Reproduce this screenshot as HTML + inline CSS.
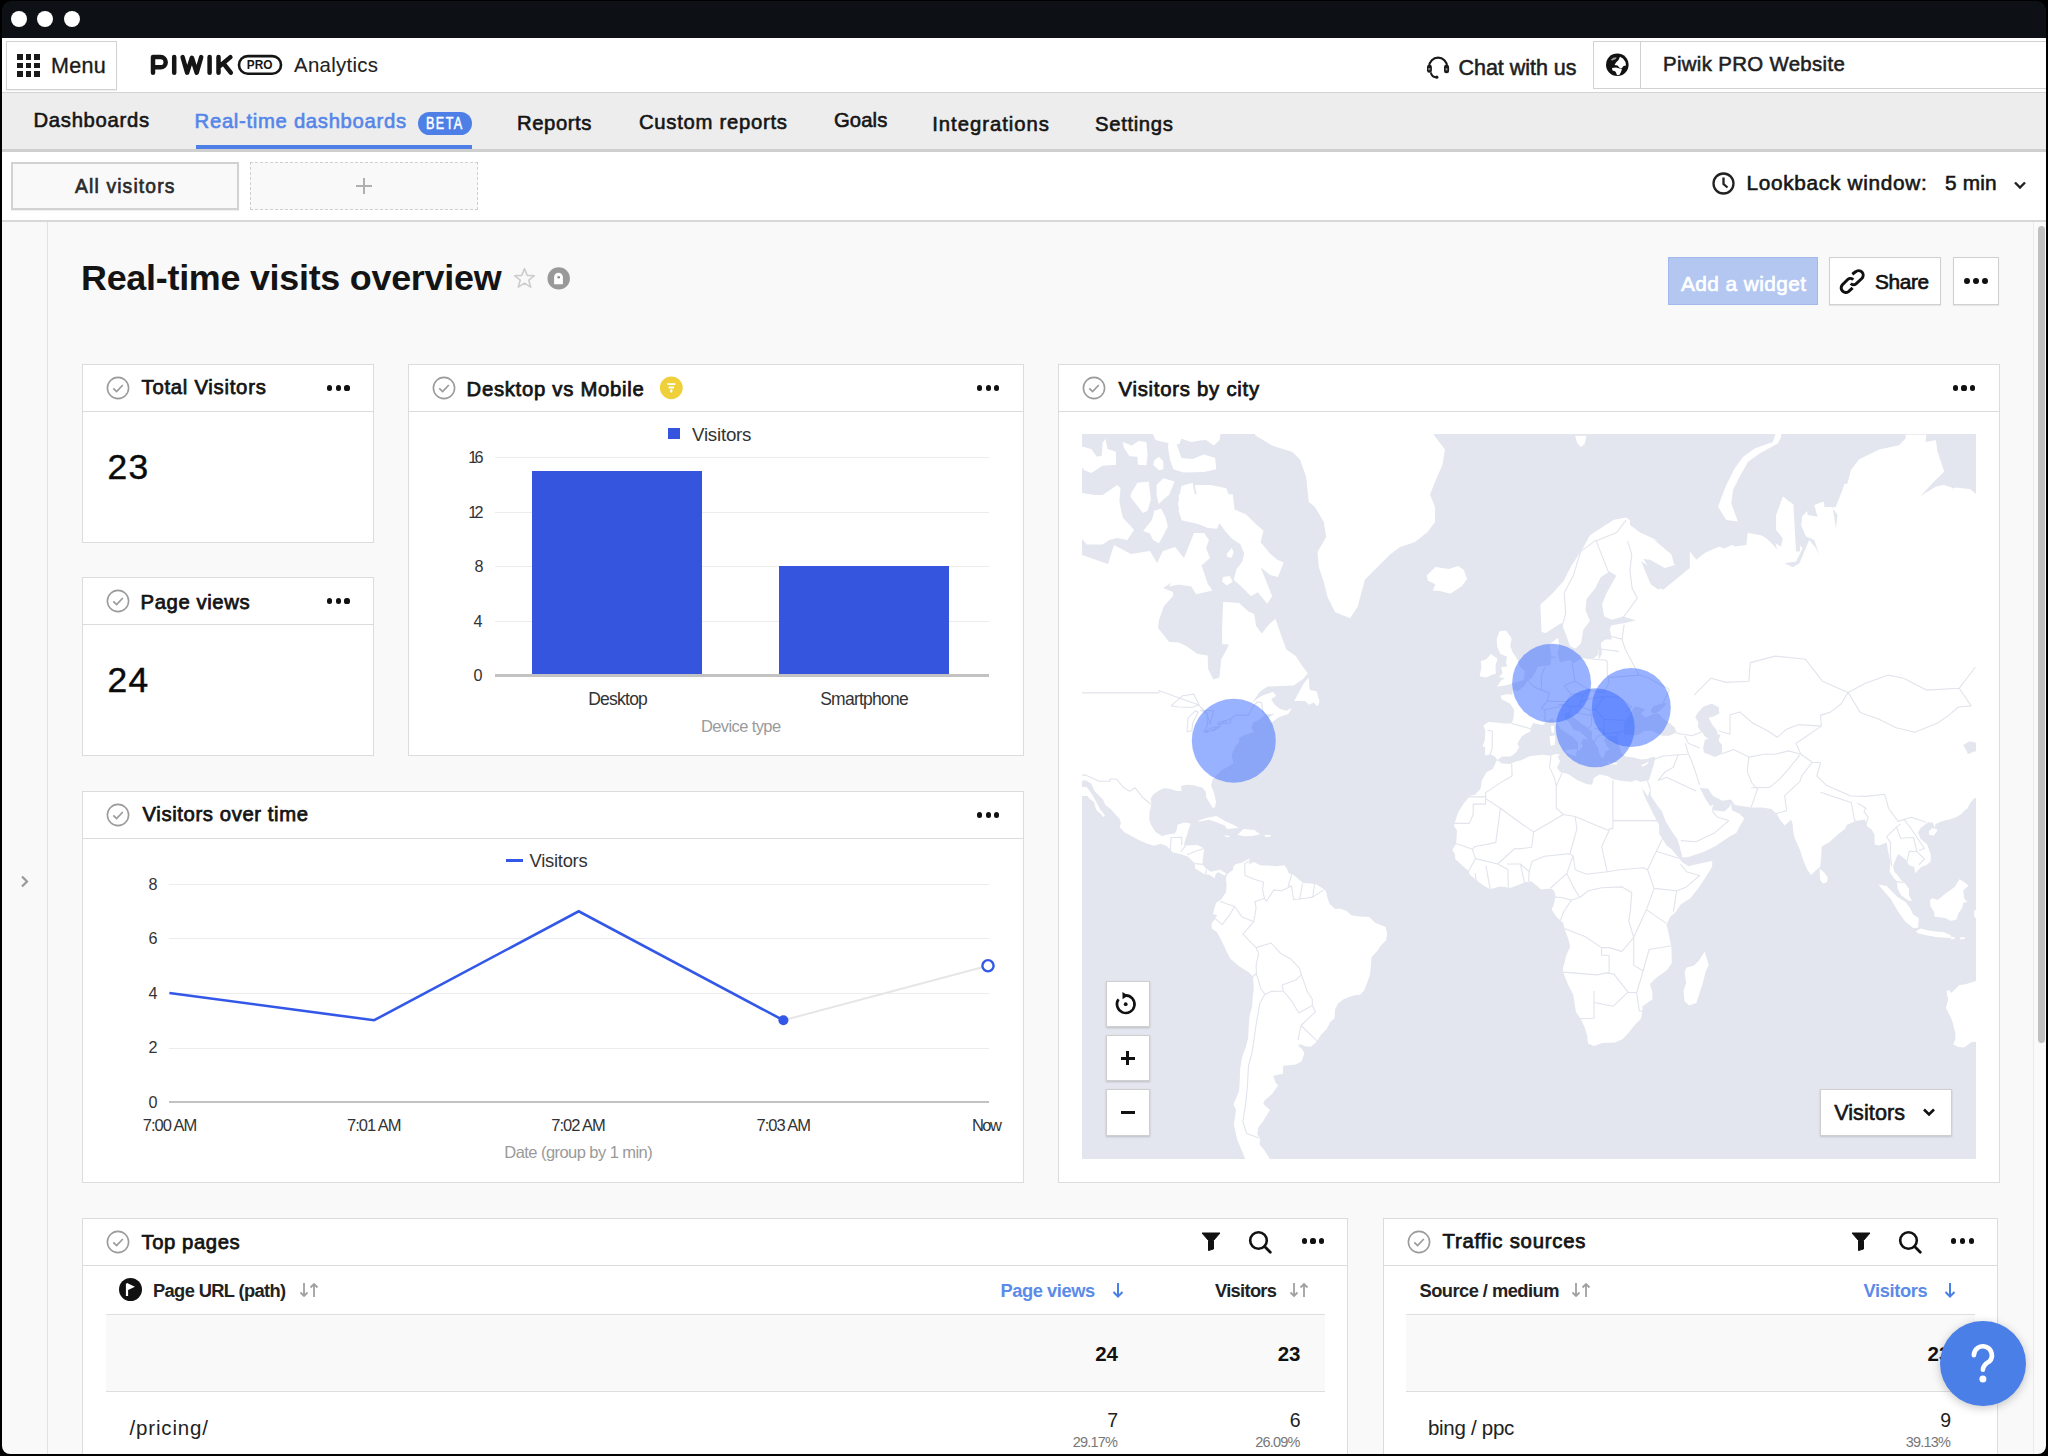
<!DOCTYPE html>
<html><head><meta charset="utf-8"><style>
html,body{margin:0;padding:0;}
body{width:2048px;height:1456px;background:#000;position:relative;overflow:hidden;font-family:"Liberation Sans",sans-serif;}
.b{position:absolute;}
.t{position:absolute;white-space:nowrap;font-family:"Liberation Sans",sans-serif;}
</style></head><body>
<div class="b" style="left:2px;top:1px;width:2044px;height:40px;background:#0d1115;border-radius:9px 9px 0 0"></div>
<div class="b" style="left:2px;top:38px;width:2044px;height:1416px;background:#fff;border-radius:0 0 9px 9px;overflow:hidden" id="win"></div>
<div class="b" style="left:11px;top:10.5px;width:16px;height:16px;border-radius:50%;background:#fff"></div>
<div class="b" style="left:36.5px;top:10.5px;width:16px;height:16px;border-radius:50%;background:#fff"></div>
<div class="b" style="left:63.5px;top:10.5px;width:16px;height:16px;border-radius:50%;background:#fff"></div>
<div class="b" style="left:6px;top:41px;width:111px;height:49px;background:#fff;border:1px solid #d2d2d2;box-sizing:border-box;box-shadow:0 1px 1px rgba(0,0,0,.06);"></div>
<div class="b" style="left:17.0px;top:54.0px;width:5.5px;height:5.5px;background:#1a1a1a;"></div>
<div class="b" style="left:17.0px;top:62.5px;width:5.5px;height:5.5px;background:#1a1a1a;"></div>
<div class="b" style="left:17.0px;top:71.0px;width:5.5px;height:5.5px;background:#1a1a1a;"></div>
<div class="b" style="left:25.5px;top:54.0px;width:5.5px;height:5.5px;background:#1a1a1a;"></div>
<div class="b" style="left:25.5px;top:62.5px;width:5.5px;height:5.5px;background:#1a1a1a;"></div>
<div class="b" style="left:25.5px;top:71.0px;width:5.5px;height:5.5px;background:#1a1a1a;"></div>
<div class="b" style="left:34.0px;top:54.0px;width:5.5px;height:5.5px;background:#1a1a1a;"></div>
<div class="b" style="left:34.0px;top:62.5px;width:5.5px;height:5.5px;background:#1a1a1a;"></div>
<div class="b" style="left:34.0px;top:71.0px;width:5.5px;height:5.5px;background:#1a1a1a;"></div>
<div class="t" id="t0" style="left:51.00px;top:55.62px;font-size:21.50px;line-height:21.50px;color:#1a1a1a;letter-spacing:0.333px;-webkit-text-stroke:0.35px #1a1a1a;">Menu</div>
<svg class="b" style="left:0;top:0" width="300" height="90" viewBox="0 0 300 90"><g fill="none" stroke="#151515" stroke-width="4.5" stroke-linecap="round" stroke-linejoin="round"><path d="M153 72.7 V57.1 H160.6 A5.1 5.1 0 0 1 160.6 67.3 H153"/><path d="M174.2 57.1 V72.7"/><path d="M182.6 57.1 L187.1 72.7 L191.9 57.8 L196.7 72.7 L201.2 57.1"/><path d="M209.6 57.1 V72.7"/><path d="M218.5 57.1 V72.7 M230.4 57.1 L219.8 66 M223.4 63.3 L230.8 72.7"/></g><rect x="239" y="56.1" width="42" height="17.6" rx="8.8" fill="none" stroke="#151515" stroke-width="2.6"/><text x="246.8" y="69.4" font-family="Liberation Sans" font-weight="bold" font-size="12" fill="#151515" textLength="25.7" lengthAdjust="spacingAndGlyphs">PRO</text></svg>
<div class="t" id="t1" style="left:294.00px;top:55.22px;font-size:20.40px;line-height:20.40px;color:#222;letter-spacing:0.294px;-webkit-text-stroke:0.1px #222;">Analytics</div>
<svg class="b" style="left:1420px;top:48px" width="40" height="40" viewBox="0 0 40 40"><path d="M9.2 18.5 A8.9 8.9 0 0 1 27 18.5" fill="none" stroke="#1a1a1a" stroke-width="2.2"/><rect x="7" y="16.8" width="4.9" height="8" rx="2.3" fill="#1a1a1a"/><rect x="24" y="16.8" width="5.1" height="8.4" rx="2.3" fill="#1a1a1a"/><rect x="8.3" y="20" width="2" height="2.2" fill="#8a8a8a"/><rect x="25.5" y="20.2" width="2" height="2.2" fill="#8a8a8a"/><path d="M10.8 24.5 Q11.8 29.3 16.6 29.3" fill="none" stroke="#1a1a1a" stroke-width="2"/><circle cx="16.8" cy="29.2" r="1.6" fill="#1a1a1a"/></svg>
<div class="t" id="t2" style="left:1458.50px;top:58.36px;font-size:21.50px;line-height:21.50px;color:#1e1e1e;letter-spacing:-0.029px;-webkit-text-stroke:0.55px #1e1e1e;">Chat with us</div>
<div class="b" style="left:1593px;top:41px;width:453px;height:48px;background:#fff;border:1px solid #d2d2d2;box-sizing:border-box;border-right:none;"></div>
<div class="b" style="left:1640px;top:42px;width:1px;height:46px;background:#d2d2d2;"></div>
<svg class="b" style="left:1600px;top:48px" width="36" height="36" viewBox="0 0 36 36"><circle cx="17.3" cy="16.7" r="11.3" fill="#111"/><path d="M20 8.8 L23 10.5 L25.5 14 L26 17.5 L23.5 18 L22 20 L20 20.2 L17.5 17.5 L14.5 17 L16 14.5 L18.5 12 Z" fill="#fff"/><path d="M12 20 L16 19.5 L19.5 20.5 L22 20.8 L21 24 L19.5 26.8 L17 27.3 L16 24.5 L15 23.3 L12.5 22.5 Z" fill="#fff"/><path d="M10.5 12 L13 9.8 L16.5 9.2 L16 11 L12.5 12.5 Z" fill="#9a9a9a"/></svg>
<div class="t" id="t3" style="left:1663.00px;top:54.04px;font-size:20.40px;line-height:20.40px;color:#1e1e1e;letter-spacing:0.337px;-webkit-text-stroke:0.55px #1e1e1e;">Piwik PRO Website</div>
<div class="b" style="left:2px;top:92px;width:2044px;height:1px;background:#d4d4d4;"></div>
<div class="b" style="left:2px;top:93px;width:2044px;height:56px;background:#ededed;"></div>
<div class="b" style="left:2px;top:149px;width:2044px;height:3px;background:#cfcfcf;"></div>
<div class="t" id="t4" style="left:33.50px;top:110.38px;font-size:20.30px;line-height:20.30px;color:#151515;letter-spacing:0.690px;-webkit-text-stroke:0.6px #151515;">Dashboards</div>
<div class="t" id="t5" style="left:517.00px;top:112.77px;font-size:20.30px;line-height:20.30px;color:#151515;letter-spacing:0.570px;-webkit-text-stroke:0.6px #151515;">Reports</div>
<div class="t" id="t6" style="left:639.00px;top:111.97px;font-size:20.30px;line-height:20.30px;color:#151515;letter-spacing:0.712px;-webkit-text-stroke:0.6px #151515;">Custom reports</div>
<div class="t" id="t7" style="left:834.00px;top:110.38px;font-size:20.30px;line-height:20.30px;color:#151515;letter-spacing:0.083px;-webkit-text-stroke:0.6px #151515;">Goals</div>
<div class="t" id="t8" style="left:932.20px;top:113.57px;font-size:20.30px;line-height:20.30px;color:#151515;letter-spacing:0.973px;-webkit-text-stroke:0.6px #151515;">Integrations</div>
<div class="t" id="t9" style="left:1095.10px;top:113.57px;font-size:20.30px;line-height:20.30px;color:#151515;letter-spacing:0.630px;-webkit-text-stroke:0.6px #151515;">Settings</div>
<div class="t" id="t10" style="left:194.60px;top:111.18px;font-size:20.30px;line-height:20.30px;color:#5585e8;letter-spacing:0.688px;-webkit-text-stroke:0.6px #5585e8;">Real-time dashboards</div>
<div class="b" style="left:418px;top:112px;width:54px;height:23px;background:#4d7fe6;border-radius:12px;"></div>
<div class="t" id="t11" style="left:426.20px;top:116.25px;font-size:15.80px;line-height:15.80px;color:#fff;letter-spacing:1.740px;-webkit-text-stroke:0.45px #fff;transform:scaleX(0.8);transform-origin:0 0;">BETA</div>
<div class="b" style="left:196px;top:144.5px;width:276px;height:4.5px;background:#4d7fe6;"></div>
<div class="b" style="left:11px;top:162px;width:228px;height:48px;background:#f9f9f9;border:2px solid #d2d2d2;box-sizing:border-box;box-shadow:0 1px 1px rgba(0,0,0,.06);"></div>
<div class="t" id="t12" style="left:75.00px;top:177.47px;font-size:19.30px;line-height:19.30px;color:#2a2a2a;letter-spacing:1.150px;-webkit-text-stroke:0.65px #2a2a2a;">All visitors</div>
<div class="b" style="left:250px;top:162px;width:228px;height:48px;box-sizing:border-box;border:1.5px dashed #cfcfcf;background:#f9f9f9"></div>
<div class="b" style="left:356px;top:185px;width:16px;height:2px;background:#b0b0b0;"></div>
<div class="b" style="left:363px;top:178px;width:2px;height:16px;background:#b0b0b0;"></div>
<svg class="b" style="left:1711px;top:171px" width="25" height="25" viewBox="0 0 25 25"><circle cx="12.5" cy="12.5" r="10" fill="none" stroke="#222" stroke-width="2.3"/><path d="M12.5 6.5 V13 L16.5 16.5" fill="none" stroke="#222" stroke-width="2.3"/></svg>
<div class="t" id="t13" style="left:1746.50px;top:172.64px;font-size:20.80px;line-height:20.80px;color:#161616;letter-spacing:0.690px;-webkit-text-stroke:0.6px #161616;">Lookback window:</div>
<div class="t" id="t14" style="left:1945.00px;top:172.64px;font-size:20.80px;line-height:20.80px;color:#161616;letter-spacing:0.162px;-webkit-text-stroke:0.6px #161616;">5 min</div>
<svg class="b" style="left:2012px;top:178.5px" width="16" height="12" viewBox="0 0 16 12"><path d="M3 3.5 L8 8.5 L13 3.5" fill="none" stroke="#222" stroke-width="2.4"/></svg>
<div class="b" style="left:2px;top:220px;width:2044px;height:2px;background:#d8d8d8;"></div>
<div class="b" style="left:2px;top:222px;width:2044px;height:1232px;background:#f9f9f9;"></div>
<div class="b" style="left:47px;top:222px;width:1px;height:1232px;background:#e2e2e2;"></div>
<svg class="b" style="left:18px;top:873px" width="14" height="17" viewBox="0 0 14 17"><path d="M4 3.5 L9 8.5 L4 13.5" fill="none" stroke="#999" stroke-width="2.2"/></svg>
<div class="b" style="left:2033px;top:222px;width:1px;height:1232px;background:#ebebeb;"></div>
<div class="b" style="left:2034px;top:222px;width:12px;height:1232px;background:#fafafa;"></div>
<div class="b" style="left:2038px;top:226px;width:7px;height:817px;background:#c1c1c1;border-radius:4px;"></div>
<div class="t" id="t15" style="left:81.00px;top:260.90px;font-size:35.90px;line-height:35.90px;font-weight:bold;color:#141414;letter-spacing:-0.265px;">Real-time visits overview</div>
<svg class="b" style="left:512px;top:266px" width="25" height="25" viewBox="0 0 24 24"><path d="M12 2.5 L14.6 9 L21.5 9.3 L16.1 13.6 L18 20.3 L12 16.5 L6 20.3 L7.9 13.6 L2.5 9.3 L9.4 9 Z" fill="none" stroke="#cdcdcd" stroke-width="1.5" stroke-linejoin="round"/></svg>
<svg class="b" style="left:547px;top:267px" width="24" height="24" viewBox="0 0 24 24"><circle cx="11.7" cy="11.4" r="11.2" fill="#999"/><path d="M7.1 17.2 V10.2 A4.4 4.4 0 0 1 15.9 10.2 V17.2 Z" fill="#fff"/><circle cx="11.7" cy="10.3" r="1.3" fill="#888"/></svg>
<div class="b" style="left:1668px;top:257px;width:150px;height:48px;background:#b3c7f1;border:1px solid #a3b9ee;box-sizing:border-box;"></div>
<div class="t" id="t16" style="left:1681.00px;top:273.98px;font-size:20.80px;line-height:20.80px;color:#fff;letter-spacing:0.432px;-webkit-text-stroke:0.65px #fff;">Add a widget</div>
<div class="b" style="left:1829px;top:257px;width:112px;height:48px;background:#fff;border:1px solid #d0d0d0;box-sizing:border-box;box-shadow:0 1px 1px rgba(0,0,0,.07);"></div>
<svg class="b" style="left:1834px;top:264px" width="36" height="36" viewBox="0 0 36 36"><g fill="none" stroke="#111" stroke-width="3"><path d="M18.3 10.2 L21.5 7.8 A4.6 4.6 0 0 1 27.8 14.5 L22 19.8 A3.8 3.8 0 0 1 16.8 19.5"/><path d="M19.2 15.8 A3.8 3.8 0 0 0 13.9 15.3 L8.2 21 A4.6 4.6 0 0 0 14.5 27.6 L18.6 23.8"/></g></svg>
<div class="t" id="t17" style="left:1875.00px;top:272.42px;font-size:20.80px;line-height:20.80px;color:#111;letter-spacing:-0.375px;-webkit-text-stroke:0.65px #111;">Share</div>
<div class="b" style="left:1953px;top:257px;width:46px;height:48px;background:#fff;border:1px solid #d0d0d0;box-sizing:border-box;box-shadow:0 1px 1px rgba(0,0,0,.07);"></div>
<div class="b" style="left:1963.8px;top:278.3px;width:5.8px;height:5.8px;border-radius:50%;background:#111"></div>
<div class="b" style="left:1972.8px;top:278.3px;width:5.8px;height:5.8px;border-radius:50%;background:#111"></div>
<div class="b" style="left:1981.8px;top:278.3px;width:5.8px;height:5.8px;border-radius:50%;background:#111"></div>
<div class="b" style="left:82px;top:364px;width:292px;height:179px;background:#fff;border:1px solid #dcdcdc;box-sizing:border-box;"></div>
<div class="b" style="left:82px;top:411px;width:292px;height:1px;background:#dcdcdc;"></div>
<svg class="b" style="left:105.5px;top:375.5px" width="24" height="24" viewBox="0 0 24 24"><circle cx="12" cy="12" r="10.6" fill="none" stroke="#9b9b9b" stroke-width="1.6"/><path d="M7.3 12.3 L10.6 15.5 L16.8 9" fill="none" stroke="#9b9b9b" stroke-width="1.7"/></svg>
<div class="t" id="t18" style="left:141.50px;top:376.85px;font-size:20.30px;line-height:20.30px;color:#141414;letter-spacing:0.745px;-webkit-text-stroke:0.75px #141414;">Total Visitors</div>
<div class="b" style="left:327.2px;top:385.4px;width:5.2px;height:5.2px;border-radius:50%;background:#111"></div>
<div class="b" style="left:335.8px;top:385.4px;width:5.2px;height:5.2px;border-radius:50%;background:#111"></div>
<div class="b" style="left:344.4px;top:385.4px;width:5.2px;height:5.2px;border-radius:50%;background:#111"></div>
<div class="t" id="t19" style="left:107.40px;top:450.15px;font-size:35.40px;line-height:35.40px;color:#0a0a0a;letter-spacing:1.460px;-webkit-text-stroke:0.45px #0a0a0a;">23</div>
<div class="b" style="left:82px;top:577px;width:292px;height:179px;background:#fff;border:1px solid #dcdcdc;box-sizing:border-box;"></div>
<div class="b" style="left:82px;top:624px;width:292px;height:1px;background:#dcdcdc;"></div>
<svg class="b" style="left:105.5px;top:588.5px" width="24" height="24" viewBox="0 0 24 24"><circle cx="12" cy="12" r="10.6" fill="none" stroke="#9b9b9b" stroke-width="1.6"/><path d="M7.3 12.3 L10.6 15.5 L16.8 9" fill="none" stroke="#9b9b9b" stroke-width="1.7"/></svg>
<div class="t" id="t20" style="left:140.50px;top:592.22px;font-size:20.30px;line-height:20.30px;color:#141414;letter-spacing:0.598px;-webkit-text-stroke:0.75px #141414;">Page views</div>
<div class="b" style="left:327.2px;top:598.4px;width:5.2px;height:5.2px;border-radius:50%;background:#111"></div>
<div class="b" style="left:335.8px;top:598.4px;width:5.2px;height:5.2px;border-radius:50%;background:#111"></div>
<div class="b" style="left:344.4px;top:598.4px;width:5.2px;height:5.2px;border-radius:50%;background:#111"></div>
<div class="t" id="t21" style="left:107.50px;top:663.39px;font-size:35.40px;line-height:35.40px;color:#0a0a0a;letter-spacing:1.340px;-webkit-text-stroke:0.45px #0a0a0a;">24</div>
<div class="b" style="left:408px;top:364px;width:616px;height:392px;background:#fff;border:1px solid #dcdcdc;box-sizing:border-box;"></div>
<div class="b" style="left:408px;top:411px;width:616px;height:1px;background:#dcdcdc;"></div>
<svg class="b" style="left:431.5px;top:375.5px" width="24" height="24" viewBox="0 0 24 24"><circle cx="12" cy="12" r="10.6" fill="none" stroke="#9b9b9b" stroke-width="1.6"/><path d="M7.3 12.3 L10.6 15.5 L16.8 9" fill="none" stroke="#9b9b9b" stroke-width="1.7"/></svg>
<div class="t" id="t22" style="left:466.50px;top:379.22px;font-size:20.30px;line-height:20.30px;color:#141414;letter-spacing:0.729px;-webkit-text-stroke:0.75px #141414;">Desktop vs Mobile</div>
<div class="b" style="left:977.1px;top:385.4px;width:5.2px;height:5.2px;border-radius:50%;background:#111"></div>
<div class="b" style="left:985.7px;top:385.4px;width:5.2px;height:5.2px;border-radius:50%;background:#111"></div>
<div class="b" style="left:994.3px;top:385.4px;width:5.2px;height:5.2px;border-radius:50%;background:#111"></div>
<div class="b" style="left:82px;top:791px;width:942px;height:392px;background:#fff;border:1px solid #dcdcdc;box-sizing:border-box;"></div>
<div class="b" style="left:82px;top:838px;width:942px;height:1px;background:#dcdcdc;"></div>
<svg class="b" style="left:105.5px;top:802.5px" width="24" height="24" viewBox="0 0 24 24"><circle cx="12" cy="12" r="10.6" fill="none" stroke="#9b9b9b" stroke-width="1.6"/><path d="M7.3 12.3 L10.6 15.5 L16.8 9" fill="none" stroke="#9b9b9b" stroke-width="1.7"/></svg>
<div class="t" id="t23" style="left:142.50px;top:803.85px;font-size:20.30px;line-height:20.30px;color:#141414;letter-spacing:0.609px;-webkit-text-stroke:0.75px #141414;">Visitors over time</div>
<div class="b" style="left:977.1px;top:812.4px;width:5.2px;height:5.2px;border-radius:50%;background:#111"></div>
<div class="b" style="left:985.7px;top:812.4px;width:5.2px;height:5.2px;border-radius:50%;background:#111"></div>
<div class="b" style="left:994.3px;top:812.4px;width:5.2px;height:5.2px;border-radius:50%;background:#111"></div>
<div class="b" style="left:1058px;top:364px;width:942px;height:819px;background:#fff;border:1px solid #dcdcdc;box-sizing:border-box;"></div>
<div class="b" style="left:1058px;top:411px;width:942px;height:1px;background:#dcdcdc;"></div>
<svg class="b" style="left:1081.5px;top:375.5px" width="24" height="24" viewBox="0 0 24 24"><circle cx="12" cy="12" r="10.6" fill="none" stroke="#9b9b9b" stroke-width="1.6"/><path d="M7.3 12.3 L10.6 15.5 L16.8 9" fill="none" stroke="#9b9b9b" stroke-width="1.7"/></svg>
<div class="t" id="t24" style="left:1118.50px;top:379.22px;font-size:20.30px;line-height:20.30px;color:#141414;letter-spacing:0.757px;-webkit-text-stroke:0.75px #141414;">Visitors by city</div>
<div class="b" style="left:1952.8px;top:385.4px;width:5.2px;height:5.2px;border-radius:50%;background:#111"></div>
<div class="b" style="left:1961.4px;top:385.4px;width:5.2px;height:5.2px;border-radius:50%;background:#111"></div>
<div class="b" style="left:1970.0px;top:385.4px;width:5.2px;height:5.2px;border-radius:50%;background:#111"></div>
<div class="b" style="left:82px;top:1218px;width:1266px;height:282px;background:#fff;border:1px solid #dcdcdc;box-sizing:border-box;"></div>
<div class="b" style="left:82px;top:1265px;width:1266px;height:1px;background:#dcdcdc;"></div>
<svg class="b" style="left:105.5px;top:1229.5px" width="24" height="24" viewBox="0 0 24 24"><circle cx="12" cy="12" r="10.6" fill="none" stroke="#9b9b9b" stroke-width="1.6"/><path d="M7.3 12.3 L10.6 15.5 L16.8 9" fill="none" stroke="#9b9b9b" stroke-width="1.7"/></svg>
<div class="t" id="t25" style="left:141.50px;top:1232.42px;font-size:20.30px;line-height:20.30px;color:#141414;letter-spacing:0.565px;-webkit-text-stroke:0.75px #141414;">Top pages</div>
<div class="b" style="left:1383px;top:1218px;width:615px;height:282px;background:#fff;border:1px solid #dcdcdc;box-sizing:border-box;"></div>
<div class="b" style="left:1383px;top:1265px;width:615px;height:1px;background:#dcdcdc;"></div>
<svg class="b" style="left:1406.5px;top:1229.5px" width="24" height="24" viewBox="0 0 24 24"><circle cx="12" cy="12" r="10.6" fill="none" stroke="#9b9b9b" stroke-width="1.6"/><path d="M7.3 12.3 L10.6 15.5 L16.8 9" fill="none" stroke="#9b9b9b" stroke-width="1.7"/></svg>
<div class="t" id="t26" style="left:1442.50px;top:1230.84px;font-size:20.30px;line-height:20.30px;color:#141414;letter-spacing:0.786px;-webkit-text-stroke:0.75px #141414;">Traffic sources</div>
<div class="b" style="left:495px;top:457px;width:494px;height:1px;background:#ececec;"></div>
<div class="t" id="t27" style="left:468.20px;top:449.01px;font-size:16.20px;line-height:16.20px;color:#333;letter-spacing:-2.700px;">16</div>
<div class="b" style="left:495px;top:512px;width:494px;height:1px;background:#ececec;"></div>
<div class="t" id="t28" style="left:468.20px;top:503.94px;font-size:16.20px;line-height:16.20px;color:#333;letter-spacing:-2.700px;">12</div>
<div class="b" style="left:495px;top:566px;width:494px;height:1px;background:#ececec;"></div>
<div class="t" id="t29" style="left:474.50px;top:558.08px;font-size:16.20px;line-height:16.20px;color:#333;letter-spacing:0.000px;">8</div>
<div class="b" style="left:495px;top:621px;width:494px;height:1px;background:#ececec;"></div>
<div class="t" id="t30" style="left:473.50px;top:613.01px;font-size:16.20px;line-height:16.20px;color:#333;letter-spacing:0.000px;">4</div>
<div class="t" id="t31" style="left:473.50px;top:667.15px;font-size:16.20px;line-height:16.20px;color:#333;letter-spacing:0.000px;">0</div>
<div class="b" style="left:532px;top:471px;width:170px;height:204px;background:#3555de;"></div>
<div class="b" style="left:779px;top:566px;width:170px;height:109px;background:#3555de;"></div>
<div class="b" style="left:495px;top:674px;width:494px;height:2.5px;background:#c2c2c2;"></div>
<div class="b" style="left:668px;top:428px;width:12px;height:11px;background:#3555de;"></div>
<div class="t" id="t32" style="left:692.00px;top:425.72px;font-size:18.70px;line-height:18.70px;color:#333;letter-spacing:-0.210px;">Visitors</div>
<div class="t" id="t33" style="left:588.15px;top:690.95px;font-size:17.50px;line-height:17.50px;color:#333;letter-spacing:-0.749px;">Desktop</div>
<div class="t" id="t34" style="left:820.16px;top:690.95px;font-size:17.50px;line-height:17.50px;color:#333;letter-spacing:-0.742px;">Smartphone</div>
<div class="t" id="t35" style="left:700.92px;top:718.01px;font-size:16.50px;line-height:16.50px;color:#9a9a9a;letter-spacing:-0.603px;">Device type</div>
<div class="b" style="left:169px;top:884px;width:820px;height:1px;background:#ececec;"></div>
<div class="t" id="t36" style="left:148.50px;top:876.05px;font-size:16.20px;line-height:16.20px;color:#333;letter-spacing:0.000px;">8</div>
<div class="b" style="left:169px;top:938px;width:820px;height:1px;background:#ececec;"></div>
<div class="t" id="t37" style="left:148.50px;top:930.15px;font-size:16.20px;line-height:16.20px;color:#333;letter-spacing:0.000px;">6</div>
<div class="b" style="left:169px;top:993px;width:820px;height:1px;background:#ececec;"></div>
<div class="t" id="t38" style="left:148.50px;top:985.05px;font-size:16.20px;line-height:16.20px;color:#333;letter-spacing:0.000px;">4</div>
<div class="b" style="left:169px;top:1048px;width:820px;height:1px;background:#ececec;"></div>
<div class="t" id="t39" style="left:148.50px;top:1039.15px;font-size:16.20px;line-height:16.20px;color:#333;letter-spacing:0.000px;">2</div>
<div class="t" id="t40" style="left:148.50px;top:1094.05px;font-size:16.20px;line-height:16.20px;color:#333;letter-spacing:0.000px;">0</div>
<div class="b" style="left:169px;top:1100.5px;width:820px;height:2.5px;background:#c2c2c2;"></div>
<svg class="b" style="left:0;top:0" width="1040" height="1200" viewBox="0 0 1040 1200"><line x1="783.4" y1="1020.25" x2="988.0" y2="965.75" stroke="#e6e6e6" stroke-width="2"/><polyline points="169.4,993.00 374.1,1020.25 578.7,911.25 783.4,1020.25" fill="none" stroke="#3358e8" stroke-width="2.6" stroke-linejoin="miter"/><circle cx="783.4" cy="1020.25" r="5" fill="#3358e8"/><circle cx="988.0" cy="965.75" r="5.6" fill="#fff" stroke="#3358e8" stroke-width="2.4"/></svg>
<div class="b" style="left:506px;top:858.5px;width:17px;height:3.0px;background:#3358e8;"></div>
<div class="t" id="t41" style="left:529.50px;top:852.08px;font-size:18.40px;line-height:18.40px;color:#333;letter-spacing:-0.257px;">Visitors</div>
<div class="t" id="t42" style="left:142.75px;top:1116.61px;font-size:16.50px;line-height:16.50px;color:#333;letter-spacing:-1.009px;">7:00 AM</div>
<div class="t" id="t43" style="left:347.00px;top:1116.61px;font-size:16.50px;line-height:16.50px;color:#333;letter-spacing:-1.009px;">7:01 AM</div>
<div class="t" id="t44" style="left:551.25px;top:1116.61px;font-size:16.50px;line-height:16.50px;color:#333;letter-spacing:-1.009px;">7:02 AM</div>
<div class="t" id="t45" style="left:756.50px;top:1116.61px;font-size:16.50px;line-height:16.50px;color:#333;letter-spacing:-1.009px;">7:03 AM</div>
<div class="t" id="t46" style="left:972.11px;top:1116.61px;font-size:16.50px;line-height:16.50px;color:#333;letter-spacing:-1.655px;">Now</div>
<div class="t" id="t47" style="left:504.31px;top:1144.37px;font-size:16.50px;line-height:16.50px;color:#9a9a9a;letter-spacing:-0.558px;">Date (group by 1 min)</div>
<svg class="b" style="left:1200.5px;top:1232px" width="20" height="19" viewBox="0 0 20 19"><path d="M1 1 H19 L12.5 8.5 V17 L7.5 18.5 V8.5 Z" fill="#111" stroke="#111" stroke-width="1" stroke-linejoin="round"/></svg>
<svg class="b" style="left:1248px;top:1229.5px" width="26" height="24" viewBox="0 0 26 24"><circle cx="10.5" cy="10.5" r="8.3" fill="none" stroke="#111" stroke-width="2.6"/><path d="M16.6 16.6 L22.3 22.3" stroke="#111" stroke-width="2.8" stroke-linecap="round"/></svg>
<div class="b" style="left:1301.8px;top:1238.4px;width:5.2px;height:5.2px;border-radius:50%;background:#111"></div>
<div class="b" style="left:1310.4px;top:1238.4px;width:5.2px;height:5.2px;border-radius:50%;background:#111"></div>
<div class="b" style="left:1319.0px;top:1238.4px;width:5.2px;height:5.2px;border-radius:50%;background:#111"></div>
<svg class="b" style="left:118px;top:1277px" width="25" height="25" viewBox="0 0 25 25"><circle cx="12.5" cy="12.5" r="11.5" fill="#111"/><path d="M9 19 V6.5" stroke="#fff" stroke-width="2.2"/><path d="M9 6 L17 9.7 L9 13.4 Z" fill="#fff"/></svg>
<div class="t" id="t48" style="left:153.00px;top:1281.82px;font-size:18.30px;line-height:18.30px;font-weight:bold;color:#222;letter-spacing:-0.623px;">Page URL (path)</div>
<svg class="b" style="left:299px;top:1282px" width="22" height="16" viewBox="0 0 22 16"><g fill="none" stroke="#a0a0a0" stroke-width="1.8"><path d="M5 1 V14 M1.5 10.5 L5 14 L8.5 10.5"/><path d="M15 15 V2 M11.5 5.5 L15 2 L18.5 5.5"/></g></svg>
<div class="t" id="t49" style="left:1000.50px;top:1281.82px;font-size:18.30px;line-height:18.30px;font-weight:bold;color:#5b8ae8;letter-spacing:-0.434px;">Page views</div>
<svg class="b" style="left:1111px;top:1282px" width="14" height="16" viewBox="0 0 14 16"><g fill="none" stroke="#4a7fe6" stroke-width="2"><path d="M7 1 V14.5 M2.5 10 L7 14.5 L11.5 10"/></g></svg>
<div class="t" id="t50" style="left:1215.00px;top:1281.52px;font-size:18.30px;line-height:18.30px;font-weight:bold;color:#222;letter-spacing:-0.680px;">Visitors</div>
<svg class="b" style="left:1289px;top:1282px" width="22" height="16" viewBox="0 0 22 16"><g fill="none" stroke="#a0a0a0" stroke-width="1.8"><path d="M5 1 V14 M1.5 10.5 L5 14 L8.5 10.5"/><path d="M15 15 V2 M11.5 5.5 L15 2 L18.5 5.5"/></g></svg>
<div class="b" style="left:106px;top:1314px;width:1219px;height:1px;background:#dedede;"></div>
<div class="b" style="left:106px;top:1315px;width:1219px;height:76px;background:#f9f9f9;"></div>
<div class="b" style="left:106px;top:1391px;width:1219px;height:1px;background:#dedede;"></div>
<div class="t" id="t51" style="left:1095.20px;top:1344.48px;font-size:20.50px;line-height:20.50px;font-weight:bold;color:#111;letter-spacing:0.000px;">24</div>
<div class="t" id="t52" style="left:1277.70px;top:1344.48px;font-size:20.50px;line-height:20.50px;font-weight:bold;color:#111;letter-spacing:0.000px;">23</div>
<div class="t" id="t53" style="left:129.50px;top:1417.70px;font-size:20.50px;line-height:20.50px;color:#222;letter-spacing:0.838px;">/pricing/</div>
<div class="t" id="t54" style="left:1107.15px;top:1411.22px;font-size:19.50px;line-height:19.50px;color:#222;letter-spacing:0.000px;">7</div>
<div class="t" id="t55" style="left:1289.65px;top:1411.22px;font-size:19.50px;line-height:19.50px;color:#222;letter-spacing:0.000px;">6</div>
<div class="t" id="t56" style="left:1072.74px;top:1434.57px;font-size:14.50px;line-height:14.50px;color:#777;letter-spacing:-0.787px;">29.17%</div>
<div class="t" id="t57" style="left:1255.24px;top:1434.57px;font-size:14.50px;line-height:14.50px;color:#777;letter-spacing:-0.787px;">26.09%</div>
<svg class="b" style="left:1850.5px;top:1232px" width="20" height="19" viewBox="0 0 20 19"><path d="M1 1 H19 L12.5 8.5 V17 L7.5 18.5 V8.5 Z" fill="#111" stroke="#111" stroke-width="1" stroke-linejoin="round"/></svg>
<svg class="b" style="left:1897.5px;top:1229.5px" width="26" height="24" viewBox="0 0 26 24"><circle cx="10.5" cy="10.5" r="8.3" fill="none" stroke="#111" stroke-width="2.6"/><path d="M16.6 16.6 L22.3 22.3" stroke="#111" stroke-width="2.8" stroke-linecap="round"/></svg>
<div class="b" style="left:1951.3px;top:1238.4px;width:5.2px;height:5.2px;border-radius:50%;background:#111"></div>
<div class="b" style="left:1959.9px;top:1238.4px;width:5.2px;height:5.2px;border-radius:50%;background:#111"></div>
<div class="b" style="left:1968.5px;top:1238.4px;width:5.2px;height:5.2px;border-radius:50%;background:#111"></div>
<div class="t" id="t58" style="left:1419.50px;top:1281.82px;font-size:18.30px;line-height:18.30px;font-weight:bold;color:#222;letter-spacing:-0.527px;">Source / medium</div>
<svg class="b" style="left:1571px;top:1282px" width="22" height="16" viewBox="0 0 22 16"><g fill="none" stroke="#a0a0a0" stroke-width="1.8"><path d="M5 1 V14 M1.5 10.5 L5 14 L8.5 10.5"/><path d="M15 15 V2 M11.5 5.5 L15 2 L18.5 5.5"/></g></svg>
<div class="t" id="t59" style="left:1863.50px;top:1281.52px;font-size:18.30px;line-height:18.30px;font-weight:bold;color:#5b8ae8;letter-spacing:-0.351px;">Visitors</div>
<svg class="b" style="left:1943px;top:1282px" width="14" height="16" viewBox="0 0 14 16"><g fill="none" stroke="#4a7fe6" stroke-width="2"><path d="M7 1 V14.5 M2.5 10 L7 14.5 L11.5 10"/></g></svg>
<div class="b" style="left:1406px;top:1314px;width:569px;height:1px;background:#dedede;"></div>
<div class="b" style="left:1406px;top:1315px;width:569px;height:76px;background:#f9f9f9;"></div>
<div class="b" style="left:1406px;top:1391px;width:569px;height:1px;background:#dedede;"></div>
<div class="t" id="t60" style="left:1927.60px;top:1344.08px;font-size:20.50px;line-height:20.50px;font-weight:bold;color:#111;letter-spacing:0.000px;">23</div>
<div class="t" id="t61" style="left:1428.00px;top:1417.70px;font-size:20.50px;line-height:20.50px;color:#222;letter-spacing:-0.296px;">bing / ppc</div>
<div class="t" id="t62" style="left:1940.15px;top:1411.22px;font-size:19.50px;line-height:19.50px;color:#222;letter-spacing:0.000px;">9</div>
<div class="t" id="t63" style="left:1905.74px;top:1434.57px;font-size:14.50px;line-height:14.50px;color:#777;letter-spacing:-0.787px;">39.13%</div>
<div class="b" style="left:1940.2px;top:1321px;width:85.4px;height:85.4px;border-radius:50%;background:#4a7fe8;box-shadow:0 2px 10px rgba(0,0,0,.22)"></div>
<svg class="b" style="left:1900px;top:1300px" width="140" height="140" viewBox="1900 1300 140 140"><path d="M1973.9 1355.3 A9 9 0 1 1 1989.6 1361.3 Q1982.9 1365.2 1982.9 1369.8" fill="none" stroke="#fff" stroke-width="4.6" stroke-linecap="round"/><circle cx="1982.9" cy="1379.1" r="3.5" fill="#fff"/></svg>
<svg class="b" style="left:1082px;top:434px" width="894" height="725" viewBox="1082 434 894 725"><rect x="1082" y="434" width="894" height="725" fill="#e3e6ee"/><path d="M1076.0 555.0 L1082.0 555.0 L1108.0 564.0 L1114.0 545.0 L1131.0 554.0 L1150.0 551.0 L1157.0 563.0 L1163.0 551.0 L1175.0 547.0 L1184.0 558.0 L1194.0 533.0 L1204.0 533.0 L1209.0 540.0 L1206.0 548.0 L1210.0 558.0 L1202.0 565.0 L1190.0 572.0 L1180.0 577.0 L1163.0 588.0 L1173.0 592.0 L1173.0 596.0 L1164.0 606.0 L1159.0 620.0 L1158.0 628.0 L1169.2 641.9 L1178.7 642.6 L1186.2 646.0 L1197.5 654.1 L1207.7 655.4 L1208.1 668.9 L1213.4 679.4 L1219.4 677.6 L1221.3 659.3 L1228.5 646.0 L1225.9 631.9 L1223.2 614.7 L1225.9 602.0 L1239.1 602.9 L1248.5 611.6 L1254.2 614.0 L1256.1 626.1 L1261.7 633.4 L1267.4 629.8 L1275.3 618.6 L1282.5 639.1 L1286.3 649.4 L1295.7 656.1 L1302.1 665.8 L1307.8 673.3 L1303.3 678.8 L1293.8 685.4 L1280.6 686.0 L1267.4 686.5 L1259.8 691.8 L1252.3 702.6 L1261.7 695.8 L1273.1 691.8 L1276.1 695.8 L1271.2 699.2 L1274.6 704.8 L1280.6 709.2 L1286.3 710.8 L1291.9 708.1 L1288.2 714.0 L1278.7 717.2 L1270.8 723.0 L1268.5 717.8 L1274.9 713.5 L1265.5 714.6 L1259.8 719.3 L1253.4 722.5 L1251.2 727.7 L1254.2 731.7 L1248.5 733.8 L1244.7 734.8 L1239.1 737.8 L1239.1 742.7 L1235.3 746.1 L1233.0 751.4 L1231.5 755.7 L1233.4 763.2 L1227.7 766.9 L1221.7 770.0 L1216.8 775.0 L1212.6 779.5 L1211.1 785.6 L1214.2 793.4 L1216.0 802.0 L1214.9 807.4 L1212.3 807.4 L1209.6 802.8 L1206.2 797.3 L1205.8 791.7 L1202.4 787.4 L1199.4 787.0 L1193.8 785.2 L1186.2 784.8 L1180.9 786.1 L1181.7 790.9 L1176.8 790.9 L1170.0 788.7 L1163.9 788.3 L1159.8 790.0 L1153.4 794.3 L1150.7 798.6 L1151.5 804.5 L1149.6 811.6 L1149.2 819.4 L1151.1 825.1 L1155.6 831.9 L1161.7 835.9 L1169.2 834.3 L1174.9 833.5 L1176.8 829.5 L1177.5 824.7 L1184.3 822.6 L1190.7 823.4 L1188.1 830.7 L1187.0 835.5 L1185.5 838.7 L1183.9 845.4 L1188.1 845.4 L1197.5 845.0 L1204.3 848.5 L1203.2 856.3 L1202.4 864.0 L1205.1 867.8 L1210.8 871.7 L1216.4 870.5 L1220.2 869.8 L1225.9 873.2 L1226.6 875.5 L1223.2 875.1 L1218.3 872.1 L1215.7 874.3 L1214.5 878.2 L1209.6 874.7 L1204.0 874.0 L1194.9 868.2 L1194.9 863.6 L1188.1 856.7 L1181.3 854.3 L1173.0 852.4 L1166.6 846.1 L1160.9 843.8 L1154.1 845.8 L1146.6 843.4 L1140.9 841.0 L1133.3 837.1 L1123.9 831.9 L1119.8 827.1 L1120.9 822.6 L1119.4 818.6 L1116.7 815.7 L1110.7 809.1 L1105.4 804.9 L1103.1 799.8 L1099.4 796.0 L1094.8 791.3 L1091.1 783.4 L1086.5 780.4 L1065.4 780.4 L1065.4 552.4Z M1065.4 787.0 L1086.5 787.0 L1089.9 791.3 L1092.6 795.6 L1095.6 800.7 L1097.5 804.1 L1100.5 809.9 L1102.0 811.6 L1105.0 815.7 L1103.1 816.9 L1101.3 814.5 L1096.3 809.9 L1094.8 804.9 L1094.1 802.0 L1089.9 799.0 L1087.3 796.0 L1065.4 795.6Z M1226.6 875.5 L1228.5 873.2 L1233.0 870.1 L1233.4 866.3 L1236.1 864.0 L1241.7 862.8 L1245.9 860.5 L1249.3 858.6 L1249.6 862.1 L1248.1 864.8 L1253.8 862.1 L1254.9 862.5 L1260.6 865.5 L1268.5 865.5 L1276.1 866.3 L1284.4 865.2 L1286.3 867.8 L1288.9 873.6 L1292.7 874.3 L1299.5 880.1 L1303.3 883.1 L1310.8 883.5 L1316.5 884.6 L1322.9 888.4 L1325.9 891.1 L1327.8 899.0 L1329.7 903.9 L1335.4 909.2 L1339.1 908.4 L1346.7 910.7 L1351.2 915.2 L1359.9 916.4 L1369.3 917.1 L1375.0 922.8 L1380.7 925.1 L1385.6 927.0 L1387.1 933.1 L1386.3 939.9 L1380.7 945.7 L1376.9 951.4 L1371.6 956.9 L1370.9 966.2 L1370.1 974.1 L1367.5 982.1 L1364.1 990.6 L1359.9 994.7 L1355.4 995.1 L1349.7 996.7 L1343.7 999.2 L1338.0 1003.4 L1335.0 1009.6 L1334.6 1018.2 L1330.5 1021.6 L1326.7 1029.0 L1321.0 1034.8 L1316.9 1041.6 L1311.2 1046.6 L1306.3 1046.6 L1300.2 1044.3 L1298.0 1045.2 L1302.5 1049.4 L1304.4 1053.6 L1301.4 1061.6 L1295.7 1064.5 L1287.4 1065.5 L1283.3 1065.5 L1282.9 1073.8 L1273.1 1075.8 L1275.7 1082.9 L1278.3 1085.0 L1272.3 1093.8 L1264.4 1100.8 L1263.2 1104.1 L1270.0 1110.1 L1262.9 1121.5 L1258.3 1127.4 L1257.2 1134.6 L1260.2 1138.3 L1259.5 1144.6 L1264.4 1150.3 L1271.9 1162.2 L1246.6 1162.2 L1237.2 1139.6 L1233.8 1124.5 L1236.1 1110.1 L1233.4 1104.6 L1239.1 1091.2 L1239.8 1079.9 L1240.2 1068.4 L1242.1 1057.3 L1245.9 1047.0 L1248.1 1037.9 L1248.9 1024.6 L1249.6 1016.0 L1252.3 1005.4 L1252.7 997.6 L1253.8 989.0 L1253.0 976.5 L1248.5 972.1 L1239.1 966.2 L1230.4 958.8 L1226.6 951.4 L1221.3 939.9 L1216.8 931.9 L1211.9 928.5 L1211.5 923.6 L1215.3 918.6 L1217.2 915.2 L1213.0 914.1 L1214.5 907.7 L1216.4 902.4 L1221.0 899.4 L1225.9 892.6 L1226.6 885.0 L1225.9 879.3Z M1426.7 575.4 L1435.4 567.0 L1448.6 568.9 L1458.1 566.1 L1463.7 569.8 L1467.1 579.0 L1461.9 586.0 L1450.5 593.7 L1441.1 591.2 L1432.8 590.4 L1435.4 584.3 L1427.9 580.8Z M1294.2 700.9 L1303.3 684.2 L1308.6 677.6 L1309.7 690.1 L1316.5 691.2 L1319.5 701.5 L1317.6 706.4 L1313.8 702.6 L1308.9 704.8 L1305.2 700.9Z M1197.5 821.0 L1207.0 817.7 L1216.4 816.1 L1225.9 821.4 L1233.4 824.7 L1238.7 827.9 L1227.0 829.1 L1224.7 825.5 L1214.5 821.4 L1208.9 819.8 L1199.4 821.4Z M1237.6 834.7 L1243.6 829.1 L1254.2 829.9 L1260.2 834.3 L1252.3 835.9 L1243.6 836.3Z M1222.8 835.1 L1230.4 835.9 L1227.7 837.5Z M1264.8 834.7 L1270.8 835.1 L1270.4 836.7 L1264.8 836.7Z M1497.0 686.5 L1505.3 685.4 L1523.8 680.0 L1524.9 670.8 L1519.6 666.4 L1517.4 659.3 L1512.5 652.1 L1510.2 646.0 L1511.7 638.4 L1506.0 630.5 L1499.6 631.2 L1496.6 639.1 L1497.4 647.4 L1500.4 654.1 L1507.2 656.7 L1506.0 662.6 L1507.2 666.4 L1501.1 667.0 L1502.6 673.3 L1498.9 677.0 L1505.3 678.8 L1501.5 680.0Z M1495.8 673.9 L1495.5 665.8 L1497.4 658.7 L1490.9 654.1 L1486.4 659.3 L1480.7 661.3 L1481.5 667.0 L1479.6 676.3 L1486.4 677.6 L1492.8 674.5Z M1497.4 759.9 L1494.7 756.2 L1490.6 754.3 L1484.9 755.2 L1485.3 747.1 L1482.6 746.6 L1484.9 739.7 L1485.3 730.7 L1483.4 725.6 L1488.3 722.0 L1496.6 722.5 L1504.2 723.5 L1511.7 723.5 L1513.6 717.8 L1514.0 709.7 L1510.2 703.7 L1501.5 699.2 L1500.8 695.8 L1507.2 694.1 L1512.5 694.7 L1512.5 688.9 L1517.7 691.2 L1524.2 686.0 L1527.9 680.6 L1531.7 678.2 L1535.5 672.0 L1537.4 667.0 L1544.6 665.8 L1550.6 665.1 L1551.4 656.1 L1549.5 643.9 L1558.1 637.7 L1559.3 646.7 L1557.4 653.4 L1560.0 662.6 L1569.5 660.0 L1573.3 663.2 L1582.7 658.0 L1588.7 659.3 L1592.9 659.3 L1597.8 654.7 L1598.2 646.0 L1598.7 660.0 L1602.0 653.8 L1600.9 642.9 L1605.3 639.6 L1611.9 639.6 L1609.7 628.6 L1611.9 625.3 L1625.1 623.1 L1636.0 620.3 L1622.9 616.5 L1611.9 619.8 L1604.2 616.5 L1602.0 604.4 L1606.4 593.4 L1616.3 575.8 L1609.7 571.4 L1600.9 576.9 L1595.4 587.9 L1586.6 598.9 L1585.5 609.9 L1589.9 620.9 L1583.3 629.7 L1581.1 642.9 L1575.6 648.4 L1570.1 646.2 L1565.7 634.1 L1561.3 623.1 L1545.9 633.0 L1541.5 631.9 L1540.4 604.4 L1551.4 594.5 L1563.5 581.3 L1571.2 565.9 L1582.2 549.5 L1589.9 535.2 L1605.3 525.3 L1614.1 519.8 L1626.2 517.6 L1636.0 525.3 L1644.8 533.0 L1658.0 540.7 L1643.1 536.9 L1654.4 540.1 L1671.4 554.4 L1674.1 564.2 L1682.8 568.0 L1684.6 546.3 L1692.2 553.4 L1699.7 555.4 L1718.6 546.3 L1724.3 548.4 L1737.5 542.2 L1745.1 532.5 L1763.9 535.8 L1771.5 543.2 L1777.2 549.4 L1771.5 530.3 L1771.5 513.1 L1777.2 497.1 L1780.9 494.5 L1788.5 500.9 L1793.4 504.6 L1796.0 551.4 L1799.8 551.4 L1801.7 516.7 L1814.9 503.4 L1822.5 486.7 L1824.4 507.1 L1835.7 507.1 L1843.2 488.0 L1847.0 474.3 L1858.3 459.7 L1877.2 450.5 L1888.5 442.5 L1888.5 427.3 L1933.9 427.3 L1937.6 452.0 L1945.2 474.3 L1941.4 484.0 L1949.0 486.7 L1971.6 489.3 L1990.5 490.6 L1990.5 738.3 L1976.2 746.6 L1977.3 743.2 L1969.7 741.2 L1963.3 745.1 L1967.1 751.9 L1967.8 754.3 L1974.3 751.4 L1990.5 753.3 L1990.5 797.7 L1976.2 797.3 L1973.5 799.0 L1970.1 803.2 L1967.1 808.7 L1964.8 810.3 L1961.4 814.0 L1956.5 816.9 L1949.7 819.4 L1947.1 819.8 L1941.4 821.4 L1935.7 823.9 L1934.6 827.5 L1932.7 822.6 L1928.2 822.2 L1920.6 827.9 L1918.0 832.7 L1920.6 838.7 L1927.1 844.6 L1930.8 854.3 L1930.8 861.3 L1926.3 865.2 L1921.4 866.7 L1915.0 873.2 L1914.2 866.7 L1909.3 865.5 L1905.5 859.4 L1899.5 854.7 L1898.0 854.3 L1896.1 858.2 L1893.1 865.9 L1894.2 871.7 L1897.2 874.7 L1901.0 880.1 L1904.4 882.7 L1908.9 888.8 L1908.9 895.6 L1912.0 900.5 L1909.3 900.9 L1901.0 895.2 L1897.6 888.8 L1896.9 881.6 L1891.6 875.1 L1889.7 871.7 L1890.4 862.1 L1887.8 850.1 L1886.7 842.6 L1879.1 845.4 L1874.6 844.6 L1874.6 834.7 L1871.6 829.5 L1867.0 825.9 L1865.1 819.4 L1860.2 820.2 L1854.6 821.4 L1847.0 824.7 L1845.1 828.7 L1837.6 834.7 L1829.3 842.2 L1821.7 846.5 L1821.3 855.9 L1820.2 866.7 L1814.9 871.3 L1811.1 875.1 L1807.4 870.1 L1803.6 860.9 L1800.2 850.5 L1794.9 838.7 L1793.4 832.7 L1792.6 823.9 L1791.1 819.4 L1784.7 825.5 L1779.8 819.4 L1777.2 814.5 L1771.5 809.1 L1762.1 807.4 L1751.1 807.4 L1734.9 804.9 L1731.1 799.4 L1722.4 800.7 L1713.0 796.0 L1708.1 788.7 L1699.7 787.8 L1705.8 799.4 L1710.3 806.2 L1713.3 804.5 L1711.8 810.3 L1724.3 811.6 L1730.0 806.2 L1731.1 802.8 L1731.8 810.3 L1739.8 814.0 L1744.3 818.6 L1739.4 826.7 L1736.4 832.7 L1728.1 837.5 L1715.6 846.1 L1703.5 852.0 L1688.4 857.1 L1682.4 857.4 L1679.7 846.5 L1677.1 838.7 L1671.4 830.7 L1665.8 821.4 L1662.0 811.6 L1656.3 804.1 L1650.7 795.2 L1650.7 789.1 L1650.3 789.1 L1648.0 796.4 L1641.6 787.4 L1640.5 781.7 L1648.8 780.4 L1650.7 774.6 L1654.1 763.6 L1655.2 757.1 L1652.5 757.1 L1646.9 759.0 L1641.2 759.4 L1633.7 757.6 L1625.4 756.6 L1621.2 752.8 L1619.7 748.1 L1618.6 743.2 L1617.4 740.2 L1617.8 736.3 L1609.1 736.3 L1605.3 738.3 L1603.8 739.7 L1606.1 744.7 L1609.5 749.5 L1605.3 751.4 L1603.5 758.0 L1600.4 756.2 L1598.6 751.4 L1598.2 748.1 L1594.8 742.7 L1591.8 738.3 L1592.1 731.7 L1588.4 728.2 L1582.7 724.6 L1575.9 719.3 L1570.6 715.6 L1569.9 711.9 L1564.9 713.5 L1565.3 719.3 L1569.9 723.0 L1573.3 729.7 L1579.7 731.2 L1586.5 737.8 L1588.4 740.2 L1583.4 738.8 L1580.8 743.2 L1583.1 746.1 L1578.9 750.9 L1577.8 749.0 L1578.2 742.7 L1572.5 736.8 L1564.6 731.7 L1560.0 728.2 L1558.1 724.1 L1552.1 718.3 L1546.8 721.4 L1543.0 725.1 L1537.4 724.1 L1533.2 723.0 L1530.2 728.7 L1530.6 731.2 L1522.3 735.8 L1519.3 740.2 L1517.4 743.7 L1519.3 747.1 L1515.9 752.4 L1510.6 756.6 L1501.9 756.6Z M1496.6 760.8 L1492.8 769.1 L1486.4 772.3 L1481.5 781.2 L1481.5 784.3 L1480.4 789.1 L1475.1 794.7 L1469.8 796.0 L1463.7 803.6 L1458.1 812.4 L1453.9 825.5 L1457.0 830.7 L1456.2 843.4 L1452.4 849.7 L1455.1 855.1 L1455.1 859.0 L1460.0 863.2 L1463.7 866.7 L1468.7 870.9 L1469.8 874.7 L1476.2 879.7 L1482.6 885.0 L1490.2 889.2 L1499.6 886.5 L1510.9 887.7 L1522.3 883.5 L1524.5 882.3 L1528.7 881.6 L1531.7 881.6 L1541.2 889.5 L1546.8 888.8 L1551.7 888.8 L1554.4 891.4 L1555.5 896.4 L1554.0 903.9 L1551.7 909.6 L1556.3 916.8 L1563.1 922.8 L1564.6 928.5 L1568.3 939.2 L1570.2 946.8 L1566.1 956.1 L1563.1 968.2 L1563.1 972.1 L1568.3 984.9 L1573.3 994.7 L1575.9 1011.8 L1580.4 1018.6 L1584.6 1027.3 L1587.2 1035.7 L1588.0 1043.4 L1594.0 1046.1 L1602.3 1042.9 L1615.2 1042.5 L1622.3 1039.3 L1628.0 1033.5 L1633.3 1026.8 L1641.2 1018.2 L1642.7 1007.5 L1641.6 1007.1 L1652.5 999.2 L1652.2 991.4 L1649.9 984.1 L1656.3 977.7 L1666.9 970.2 L1671.8 963.1 L1671.4 947.6 L1668.8 934.2 L1666.5 924.7 L1670.3 916.4 L1675.6 912.2 L1680.9 904.3 L1690.3 898.2 L1697.9 888.8 L1704.3 879.3 L1710.3 869.8 L1712.2 866.3 L1712.2 860.9 L1703.5 862.8 L1688.4 866.3 L1682.0 862.1 L1679.0 858.2 L1671.4 848.9 L1666.5 845.4 L1659.3 833.5 L1659.0 824.7 L1652.9 813.2 L1648.0 803.2 L1645.0 797.3 L1641.6 787.4 L1640.5 781.7 L1635.6 779.9 L1631.4 781.7 L1620.5 780.8 L1612.9 779.0 L1607.2 775.9 L1599.7 774.6 L1594.0 777.7 L1592.1 784.8 L1586.5 783.9 L1577.0 779.9 L1568.3 774.1 L1560.4 772.3 L1557.0 767.8 L1560.0 761.3 L1557.8 756.6 L1560.4 754.7 L1555.5 753.8 L1551.0 755.7 L1542.3 754.7 L1529.8 756.2 L1520.4 760.4 L1516.2 761.3 L1510.2 764.1 L1501.5 763.6 L1498.1 760.4Z M1704.7 951.4 L1708.8 965.1 L1705.8 971.0 L1702.8 982.9 L1699.0 995.1 L1696.3 1002.9 L1689.2 1005.4 L1684.6 1001.3 L1683.5 991.0 L1686.2 982.5 L1684.6 972.9 L1686.2 967.8 L1694.1 965.5 L1699.4 960.0Z M1819.8 868.6 L1824.4 872.8 L1827.8 877.4 L1827.0 882.0 L1822.8 883.5 L1820.2 880.1 L1819.8 874.7Z M1878.4 884.6 L1886.7 886.1 L1897.2 896.7 L1905.5 902.0 L1910.4 908.8 L1913.1 914.5 L1918.8 917.9 L1918.0 927.7 L1913.1 928.1 L1904.8 920.9 L1898.0 911.5 L1890.8 899.0 L1882.9 889.9Z M1915.7 931.5 L1920.6 928.5 L1928.2 930.4 L1935.7 931.5 L1943.7 931.9 L1950.9 935.3 L1950.5 938.0 L1935.7 936.9 L1926.3 935.3 L1918.8 933.4Z M1930.1 900.1 L1932.3 898.2 L1937.6 900.1 L1945.2 893.7 L1954.6 886.9 L1959.5 879.3 L1962.9 881.2 L1968.6 885.4 L1965.2 888.8 L1963.3 889.9 L1964.1 898.2 L1967.1 902.0 L1963.3 902.8 L1962.2 907.7 L1958.4 913.4 L1956.5 919.4 L1950.9 920.9 L1945.2 917.9 L1937.6 917.1 L1934.6 916.8 L1933.9 911.5 L1930.5 906.6Z M1929.0 831.1 L1932.0 828.3 L1936.1 828.7 L1937.6 830.3 L1933.9 835.5 L1929.0 834.7Z M1640.5 765.5 L1649.1 761.3 L1646.9 764.6 L1643.1 766.4Z M1607.2 762.2 L1617.8 763.2 L1616.7 764.6 L1609.1 764.6Z M1565.3 750.0 L1577.4 749.0 L1575.5 756.6 L1565.7 752.4Z M1549.5 736.3 L1555.5 735.3 L1554.7 744.7 L1551.0 746.1 L1550.2 743.2Z M1551.0 726.1 L1554.0 725.6 L1554.4 730.7 L1553.2 733.8 L1551.4 731.7Z M1575.1 435.8 L1586.5 435.8 L1584.6 444.1 L1580.8 447.3 L1577.0 442.5Z M1752.6 435.8 L1779.0 435.8 L1777.2 444.1 L1760.2 459.7 L1745.1 474.3 L1735.6 488.0 L1730.0 503.4 L1733.7 519.0 L1726.2 523.6 L1718.6 521.3 L1714.9 513.1 L1720.5 497.1 L1728.1 481.2 L1737.5 459.7Z M1973.9 915.2 L1974.6 910.3 L1990.5 910.3 L1990.5 920.9 L1975.4 917.9Z M1950.9 936.5 L1955.4 937.6 L1953.5 939.2 L1951.2 939.2Z M1959.9 937.6 L1964.8 937.3 L1965.2 938.8 L1960.3 939.5Z M1946.7 991.0 L1949.3 990.2 L1951.2 993.0 L1959.2 985.3 L1966.3 984.1 L1975.4 981.3 L1981.1 972.9 L1990.5 967.0 L1990.5 1042.5 L1978.8 1041.6 L1971.6 1042.0 L1964.1 1047.5 L1958.4 1047.0 L1953.1 1044.3 L1955.4 1039.3 L1955.4 1033.5 L1952.7 1022.5 L1951.2 1018.2 L1947.1 1010.1 L1945.9 1008.0 L1948.2 999.2 L1947.1 995.1Z M1255.0 432.0 L1255.0 435.0 L1272.5 445.8 L1292.5 452.0 L1300.0 459.5 L1306.2 477.0 L1308.8 502.0 L1315.0 507.0 L1323.8 522.0 L1326.2 537.0 L1317.5 552.0 L1318.8 567.0 L1323.8 582.0 L1327.5 597.0 L1335.0 612.0 L1350.0 618.2 L1357.5 607.0 L1365.0 579.5 L1377.5 567.0 L1390.0 554.5 L1400.0 547.0 L1415.0 542.0 L1427.5 532.0 L1435.0 522.0 L1435.0 507.0 L1430.0 494.5 L1435.0 482.0 L1442.5 464.5 L1445.0 449.5 L1433.8 435.0 L1433.8 432.0Z M1080.0 446.1 L1091.3 448.9 L1096.9 456.8 L1102.0 455.6 L1102.5 443.3 L1105.3 438.8 L1107.6 448.9 L1116.0 451.7 L1116.0 464.7 L1102.5 465.8 L1091.3 473.1 L1084.5 470.3 L1080.0 465.8Z M1122.8 442.1 L1131.8 445.5 L1138.6 441.0 L1146.4 442.1 L1147.6 454.5 L1146.4 465.2 L1138.0 464.7 L1137.4 456.8 L1129.5 456.2 L1123.9 447.8Z M1154.3 460.2 L1158.8 456.8 L1163.3 461.3 L1163.3 469.2 L1158.8 470.3 L1153.2 464.7Z M1169.0 442.1 L1176.8 444.4 L1181.4 457.9 L1192.6 459.0 L1203.9 454.5 L1215.1 457.9 L1216.3 469.2 L1203.9 472.0 L1183.6 472.5 L1173.5 469.2 L1170.1 460.2 L1167.8 446.6Z M1152.1 432.0 L1220.8 432.0 L1219.6 439.9 L1214.0 445.5 L1206.1 439.9 L1199.4 440.4 L1191.5 442.1 L1181.4 438.8 L1179.1 444.4 L1170.1 443.3 L1163.3 442.1 L1155.5 439.9Z M1080.0 492.8 L1094.6 495.1 L1102.5 495.1 L1109.3 490.6 L1117.2 484.9 L1120.5 488.3 L1119.4 501.8 L1122.8 517.6 L1134.1 530.0 L1127.3 540.1 L1117.2 537.9 L1109.3 540.1 L1102.5 544.6 L1086.8 544.6 L1080.0 536.7Z M1130.7 493.9 L1137.4 482.7 L1148.7 481.5 L1150.9 499.6 L1147.6 510.8 L1143.1 513.1 L1130.7 497.3Z M1156.6 484.9 L1163.3 478.2 L1174.6 481.5 L1169.0 495.1 L1163.3 499.6 L1158.8 504.1 L1156.6 495.1Z M1154.3 510.8 L1161.1 508.6 L1165.6 517.6 L1167.8 526.6 L1163.3 535.6 L1158.8 543.5 L1153.2 540.1 L1149.8 533.4 L1143.1 531.1 L1152.1 519.8Z M1178.0 504.1 L1181.4 486.1 L1192.6 482.7 L1194.9 495.1 L1193.7 510.8 L1197.1 517.6 L1181.4 519.8Z M1194.9 484.9 L1210.6 484.9 L1226.4 488.3 L1228.6 495.1 L1210.6 499.6 L1209.5 508.6 L1199.4 510.8Z M1178.8 494.2 L1232.7 494.2 L1234.6 509.6 L1246.2 514.4 L1255.8 524.0 L1263.5 530.8 L1260.6 542.3 L1270.2 553.8 L1276.9 559.6 L1283.7 562.5 L1277.9 576.9 L1270.2 575.0 L1260.6 567.3 L1268.3 586.5 L1272.1 596.2 L1267.3 603.8 L1257.7 592.3 L1251.0 596.2 L1241.3 586.5 L1233.7 579.8 L1236.5 569.2 L1242.3 561.5 L1244.2 553.8 L1240.4 544.2 L1231.7 538.5 L1225.0 530.8 L1219.2 523.1 L1217.3 528.8 L1207.7 527.9 L1198.1 524.0 L1181.7 520.2 L1178.8 511.5Z M1189.4 566.3 L1197.1 560.6 L1201.9 566.3 L1207.7 583.7 L1212.5 590.4 L1196.2 594.2 L1191.3 586.5 L1178.8 584.6 L1169.2 586.5 L1174.0 576.9 L1186.5 573.1Z M1226.9 553.8 L1231.7 548.1 L1233.7 551.9 L1231.7 557.7 L1226.9 556.7Z M1223.1 576.9 L1229.8 576.0 L1232.7 581.7 L1226.9 585.6 L1222.1 581.7Z M1223.1 601.9 L1239.4 602.9 L1246.2 610.6 L1253.8 615.4 L1250.0 620.2 L1253.8 629.8 L1261.5 633.7 L1270.2 623.1 L1274.0 620.2 L1279.8 634.6 L1284.6 644.2 L1222.1 644.2 L1222.1 629.8Z" fill="#fff" fill-rule="nonzero"/><path d="M1624.2 734.8 L1628.4 734.8 L1636.7 735.3 L1645.0 730.7 L1651.4 730.7 L1662.0 735.8 L1669.5 735.8 L1675.6 732.8 L1675.2 727.7 L1668.8 723.0 L1662.7 718.3 L1659.3 714.0 L1656.3 713.5 L1652.2 714.6 L1645.0 717.8 L1641.2 713.0 L1645.0 709.7 L1637.8 706.4 L1634.4 707.0 L1630.3 713.5 L1626.5 719.3 L1623.9 725.6Z M1652.5 713.5 L1656.7 713.0 L1662.7 708.1 L1666.9 703.1 L1660.1 703.7 L1652.5 707.0 L1650.7 711.3Z M1703.5 706.4 L1711.8 703.7 L1718.6 707.0 L1719.4 713.5 L1713.0 716.7 L1708.4 717.8 L1712.2 724.6 L1717.1 730.7 L1717.9 734.8 L1720.5 734.3 L1718.6 740.7 L1722.0 745.1 L1722.0 753.8 L1714.9 757.1 L1708.4 754.3 L1703.9 752.4 L1703.1 748.1 L1705.0 739.7 L1708.4 738.8 L1704.3 735.8 L1702.0 731.7 L1697.9 726.1 L1698.2 722.0 L1695.2 717.2 L1697.9 712.4 L1701.6 708.6Z M1648.8 566.1 L1641.2 561.3 L1645.0 570.8 L1650.7 584.3 L1658.2 589.5 L1669.5 583.4 L1673.3 570.8 L1665.8 568.9 L1660.1 568.9 L1654.4 563.2Z" fill="#e3e6ee"/><path d="M1640.0 432.0 L1988.6 432.0 L1988.6 493.4 L1975.4 493.4 L1965.4 485.1 L1952.1 488.4 L1948.8 483.5 L1935.5 486.8 L1920.6 495.9 L1932.2 483.5 L1945.5 470.2 L1952.1 460.2 L1947.1 445.3 L1938.8 439.5 L1925.5 442.0 L1926.4 434.8 L1905.6 434.8 L1905.6 438.6 L1899.0 445.3 L1875.7 450.3 L1860.8 456.9 L1850.8 470.2 L1847.5 483.5 L1827.6 486.8 L1827.6 501.7 L1837.6 515.0 L1835.9 528.3 L1832.6 506.7 L1822.6 501.7 L1814.3 505.0 L1817.6 516.7 L1807.7 515.0 L1806.0 501.7 L1802.7 511.7 L1801.0 525.0 L1806.0 536.6 L1814.3 539.9 L1819.3 554.9 L1816.0 548.2 L1809.3 539.9 L1804.4 551.5 L1799.4 563.2 L1792.7 567.3 L1784.4 563.2 L1796.1 561.5 L1802.7 548.2 L1796.1 541.6 L1797.7 525.0 L1794.4 511.7 L1796.1 495.9 L1782.8 496.7 L1776.1 515.0 L1776.1 529.9 L1782.8 538.3 L1781.1 546.6 L1769.5 539.9 L1756.2 532.4 L1747.9 531.6 L1746.3 544.9 L1734.6 546.6 L1726.3 541.6 L1719.7 546.6 L1706.4 551.5 L1696.4 559.8 L1689.8 551.5 L1689.8 568.1 L1673.2 581.4 L1663.2 589.7 L1653.3 584.7 L1651.6 571.5 L1643.3 559.0 L1650.0 559.8 L1664.9 568.1 L1675.7 564.8 L1673.2 554.9 L1656.6 539.9 L1640.0 532.4 L1630.0 525.0 L1630.0 432.0Z" fill="#e3e6ee"/><path d="M1781.1 432.0 L1781.1 437.0 L1777.8 443.6 L1759.5 453.6 L1747.9 461.9 L1739.6 476.8 L1733.0 490.1 L1731.3 503.4 L1737.9 521.6 L1726.3 520.0 L1718.0 506.7 L1723.0 493.4 L1726.3 485.1 L1734.6 468.5 L1742.9 456.9 L1754.6 448.6 L1772.8 442.0 L1776.1 432.0Z" fill="#fff"/><path d="M1065.4 692.9 L1159.0 692.9 L1159.0 690.6 L1180.5 698.6 L1198.3 704.8 L1200.6 707.0 L1207.0 713.5 L1207.4 725.6 L1204.7 730.2 L1207.0 732.2 L1220.2 726.6 L1220.2 724.1 L1229.6 719.3 L1236.4 715.1 L1248.5 715.1 L1253.4 705.9 L1257.2 702.0 L1261.7 702.6 L1262.5 711.3 L1265.5 716.2 M1065.4 775.9 L1085.4 775.0 L1099.4 781.2 L1109.9 781.2 L1109.9 779.0 L1116.4 779.0 L1123.9 787.8 L1129.6 791.3 L1135.2 787.8 L1142.8 797.7 L1151.5 804.5 M1170.4 850.5 L1171.1 837.5 L1175.3 837.5 L1181.7 837.1 L1181.7 845.0 M1180.9 851.6 L1185.5 845.8 M1187.0 854.7 L1197.5 850.5 L1204.3 848.5 M1194.9 863.6 L1202.8 864.4 M1205.5 874.7 L1206.6 869.4 M1224.3 878.5 L1226.6 873.6 M1171.1 705.9 L1182.4 695.8 L1193.8 694.1 L1199.1 704.8 L1191.9 707.5 L1178.7 707.0 L1171.1 705.9 M1187.0 731.7 L1188.1 717.8 L1195.3 710.8 L1198.3 711.9 L1192.6 723.0 L1191.9 730.7 L1187.0 731.7 M1200.2 710.3 L1207.0 713.5 L1210.0 724.1 L1213.8 710.8 L1200.2 710.3 M1203.6 732.2 L1214.5 730.2 L1220.6 726.1 L1211.9 727.7 L1203.6 732.2 M1217.2 724.1 L1230.4 723.0 L1230.8 719.3 L1219.1 722.0 L1217.2 724.1 M1249.3 860.9 L1244.7 863.6 L1245.1 875.5 L1254.2 879.3 L1263.6 882.3 L1262.5 888.8 L1264.4 898.2 L1254.9 901.6 L1256.1 907.7 L1253.8 921.7 M1291.9 873.6 L1288.2 885.8 L1291.6 886.1 L1281.4 890.7 L1273.8 889.9 L1266.3 901.3 L1264.4 898.2 M1302.5 883.5 L1299.5 900.1 M1314.6 884.2 L1312.7 897.1 M1291.6 886.1 L1293.5 899.4 L1305.2 898.2 L1312.7 897.1 L1323.7 889.9 M1220.2 900.9 L1227.7 904.3 L1234.5 906.2 L1242.1 917.1 L1253.8 921.7 M1215.3 918.6 L1222.1 924.7 L1229.6 915.2 L1234.5 906.2 M1253.8 921.7 L1242.9 934.2 L1250.4 941.8 L1256.1 947.6 L1258.7 953.4 L1256.1 965.1 L1256.4 973.3 L1253.0 976.5 M1256.1 947.6 L1271.2 943.0 L1280.6 953.4 L1290.1 958.4 L1299.5 968.2 L1301.4 974.9 L1295.7 980.1 L1282.1 984.9 L1283.3 991.0 L1271.2 991.4 L1264.8 994.3 M1256.4 973.3 L1260.6 988.2 L1264.8 994.3 L1259.8 1003.4 L1256.1 1024.6 L1254.2 1037.9 L1252.3 1051.7 L1248.5 1066.0 L1247.4 1086.0 L1245.9 1101.9 L1242.9 1121.5 L1246.6 1133.4 L1259.8 1138.3 M1301.4 974.9 L1307.4 991.8 L1312.3 999.2 L1312.3 1005.4 L1298.7 1013.0 L1291.9 1001.3 L1283.3 991.0 M1312.3 1005.4 L1315.4 1011.8 L1301.0 1025.5 L1317.2 1041.1 M1301.0 1025.5 L1298.0 1040.2 M1511.7 764.1 L1512.1 775.9 L1504.2 780.4 L1485.6 792.6 L1485.6 798.6 L1500.4 808.2 L1523.0 824.7 L1533.6 831.9 L1563.4 814.5 L1556.3 808.2 L1556.3 786.1 L1554.4 778.1 L1549.5 766.9 L1551.0 755.7 M1485.6 796.9 L1468.7 796.9 M1485.6 798.6 L1485.6 804.1 L1473.2 804.1 L1473.2 814.5 L1469.4 823.4 L1454.3 823.4 M1500.4 808.2 L1495.8 842.6 L1475.1 846.5 L1472.4 849.3 L1456.2 843.4 M1561.9 773.2 L1556.3 786.1 M1612.9 779.9 L1612.9 820.6 L1658.2 820.6 M1563.4 814.5 L1575.1 816.5 L1609.1 830.7 L1609.1 828.7 L1612.9 828.7 L1612.9 820.6 M1533.6 831.9 L1531.7 847.3 L1519.3 848.9 L1514.7 848.5 L1497.7 864.0 L1475.5 858.6 L1472.4 849.3 M1575.1 816.5 L1577.0 828.7 L1569.9 853.6 L1544.9 856.3 L1532.1 861.3 L1529.1 871.7 M1609.1 830.7 L1601.6 846.5 L1607.2 871.7 L1620.5 869.8 L1643.1 867.8 L1647.6 869.8 L1656.3 851.2 L1663.5 836.7 L1659.3 833.5 M1656.3 851.2 L1678.6 858.2 M1647.6 869.8 L1654.1 888.4 L1676.7 890.7 L1686.5 886.9 L1699.7 875.5 L1686.5 871.7 L1680.5 864.0 M1676.7 890.7 L1673.3 911.8 M1654.1 888.4 L1646.5 909.6 L1666.5 923.6 M1569.9 853.6 L1573.3 856.3 L1572.1 858.6 L1566.8 873.6 L1550.6 888.0 M1573.3 856.3 L1575.1 869.8 L1586.5 874.3 L1607.2 871.7 M1566.8 873.6 L1573.3 886.9 L1579.7 897.5 L1588.4 890.7 L1601.6 887.7 L1622.0 886.9 L1631.8 892.6 L1630.3 911.1 L1628.8 920.9 L1633.7 937.3 M1579.7 897.5 L1571.4 900.1 L1561.2 897.5 L1555.1 897.1 M1571.4 900.1 L1563.8 911.5 L1560.4 920.5 M1564.6 928.5 L1578.9 934.2 L1585.0 936.5 L1601.6 947.6 L1609.1 947.6 L1622.0 951.4 L1633.7 937.3 L1646.5 909.6 M1563.1 972.1 L1597.0 974.9 L1606.5 972.9 L1614.0 974.1 L1628.0 992.2 L1636.7 992.6 L1643.1 971.0 L1633.7 965.1 L1633.7 937.3 M1601.6 947.6 L1601.6 955.3 L1609.1 955.3 L1609.1 972.9 M1594.0 991.0 L1594.0 1002.5 L1594.0 1018.2 L1580.4 1018.6 M1594.0 1002.5 L1612.9 1006.3 L1628.0 992.2 M1636.7 992.6 L1639.3 1010.9 L1642.7 1011.3 M1671.4 945.7 L1649.1 949.5 L1643.1 971.0 M1497.7 864.0 L1507.9 869.4 L1508.3 886.9 M1507.2 864.0 L1520.4 864.0 L1524.5 882.3 M1520.4 864.0 L1529.1 871.7 L1528.7 881.6 M1486.0 865.9 L1490.2 889.2 M1475.5 858.6 L1468.7 870.9 M1475.1 873.2 L1476.2 879.7 M1490.2 754.3 L1492.1 748.1 L1492.4 731.2 L1487.5 730.2 M1511.7 723.5 L1530.6 728.7 M1527.9 680.6 L1534.4 687.1 L1541.5 690.1 L1549.5 692.9 L1547.2 700.9 L1541.2 708.1 L1544.9 710.3 L1544.9 719.3 L1546.8 721.4 M1544.9 667.0 L1541.2 676.3 L1541.5 682.4 L1541.5 690.1 M1551.0 656.7 L1555.9 657.4 M1572.1 663.2 L1574.0 675.1 L1575.1 681.2 L1564.2 685.4 L1570.6 694.1 L1567.6 701.5 L1556.3 701.5 L1547.2 700.9 M1558.1 704.8 L1564.6 704.2 L1570.2 707.0 L1570.2 711.9 M1544.2 709.7 L1558.1 707.0 L1564.6 704.2 M1570.6 694.1 L1575.1 694.1 L1582.7 695.2 L1580.8 701.5 L1578.9 705.9 L1570.2 707.0 M1575.1 681.2 L1589.5 690.1 L1603.8 692.4 L1609.1 682.4 L1607.2 673.9 L1607.2 661.3 L1604.6 660.0 L1592.9 659.3 M1582.7 695.2 L1589.5 690.1 M1580.8 701.5 L1594.0 697.5 L1603.8 696.9 M1598.2 648.7 L1618.9 651.4 M1600.8 638.4 L1610.3 636.2 L1622.0 639.1 M1624.2 624.6 L1622.0 639.1 L1625.0 648.7 L1638.6 674.5 M1607.6 677.6 L1639.3 675.1 L1648.8 678.2 L1669.5 689.5 L1662.7 703.7 M1603.8 696.9 L1618.9 696.9 L1631.8 707.0 L1625.0 712.4 M1604.2 719.3 L1623.9 720.4 L1626.5 722.0 M1603.5 734.3 L1617.8 732.2 L1624.2 730.7 M1594.0 742.2 L1597.4 736.3 L1605.0 734.3 M1578.9 705.9 L1589.9 710.3 L1595.2 709.2 L1604.2 719.3 L1603.5 734.3 M1595.2 709.2 L1603.8 696.9 M1589.9 710.3 L1591.8 715.6 L1591.4 725.6 L1588.4 728.2 M1575.9 712.4 L1582.7 714.0 L1591.8 715.6 M1594.0 728.2 L1603.5 729.7 L1605.0 734.3 M1617.8 732.2 L1617.4 736.3 M1561.5 628.3 L1565.7 613.2 L1564.2 592.9 L1573.3 575.4 L1580.8 551.4 L1595.9 540.1 L1608.7 572.6 M1595.9 541.1 L1616.7 532.5 L1626.1 520.2 M1627.6 541.1 L1631.8 554.4 L1629.9 570.8 L1632.2 588.6 L1637.4 597.9 L1623.5 617.1 M1694.1 695.2 L1711.1 678.2 L1726.2 682.4 L1748.8 681.2 L1750.3 662.6 L1775.3 656.1 L1805.5 659.3 L1822.5 681.2 L1848.1 692.4 M1718.6 730.7 L1730.0 734.3 L1730.0 715.1 L1739.8 711.9 L1752.6 723.0 L1767.7 730.7 L1777.2 737.3 L1786.6 729.2 L1798.7 724.6 L1821.3 726.1 L1820.6 715.1 L1830.0 712.4 L1841.3 703.7 L1848.1 692.4 M1848.1 692.4 L1865.9 683.0 L1888.5 675.1 L1903.7 678.2 L1926.3 690.1 L1959.2 688.3 L1971.6 672.0 L1975.4 667.0 M1848.1 692.4 L1860.2 712.4 L1879.1 719.3 L1896.1 727.7 L1915.0 732.2 L1937.6 723.0 L1949.0 715.1 L1958.4 707.0 L1971.2 705.9 L1959.2 688.3 M1821.3 726.1 L1803.6 738.3 L1796.0 743.2 L1800.9 754.3 L1812.3 762.2 L1820.6 762.7 L1816.8 775.9 L1826.2 785.2 L1850.8 796.0 L1865.9 796.4 L1884.8 794.3 L1888.5 808.2 L1898.0 821.4 L1911.2 817.3 L1926.3 822.2 M1685.4 743.2 L1688.4 753.8 L1693.0 764.6 L1699.7 784.8 M1722.0 753.8 L1733.7 749.5 L1748.8 757.1 L1747.3 771.4 L1751.9 783.0 L1757.5 789.1 L1751.1 807.4 M1751.1 787.8 L1769.6 787.4 L1780.2 778.6 L1788.5 769.1 L1799.8 755.2 M1748.8 757.1 L1763.9 754.3 L1775.3 754.3 L1788.5 750.9 L1800.9 754.3 M1776.0 813.6 L1786.6 810.7 L1784.7 795.6 L1799.8 781.7 L1801.7 775.9 L1812.3 762.2 M1654.1 759.4 L1662.0 756.2 L1678.2 754.7 L1687.7 754.3 M1678.2 754.7 L1673.3 767.3 L1665.0 771.9 L1658.2 780.4 L1666.5 777.2 L1696.0 790.9 M1680.9 840.6 L1696.0 841.8 L1714.9 832.7 L1728.8 820.6 L1717.1 816.9 L1711.8 810.3 M1647.6 781.2 L1650.3 789.1 M1820.6 792.2 L1850.8 802.4 M1851.2 802.0 L1854.6 820.6 L1865.9 824.7 L1868.2 817.3 L1864.0 811.6 L1865.9 808.2 L1857.6 803.2 M1891.6 865.9 L1890.4 854.3 L1890.4 842.6 L1886.7 836.7 L1896.5 827.1 L1900.6 823.9 M1903.7 819.0 L1911.2 828.7 L1924.4 848.5 L1918.8 850.5 M1907.1 861.3 L1909.3 851.2 L1916.9 851.6 L1924.4 859.0 L1918.8 864.8 M1896.5 827.1 L1900.6 838.3 L1913.5 837.5 L1916.9 851.6 M1896.9 881.6 L1903.7 882.7 M1669.5 723.5 L1677.1 733.3 L1692.2 735.8 L1701.6 731.7 L1697.9 725.6 M1684.6 735.8 L1688.4 743.2 L1699.7 748.1" fill="none" stroke="#e1e4ec" stroke-width="1.1" stroke-linejoin="round"/></svg>
<svg class="b" style="left:1082px;top:434px" width="894" height="725" viewBox="1082 434 894 725"><g fill="#3366ff" fill-opacity="0.5"><circle cx="1233.8" cy="740.8" r="42"/><circle cx="1551.6" cy="683.2" r="39.5"/><circle cx="1595.2" cy="727.7" r="39.5"/><circle cx="1631.3" cy="707.6" r="39.5"/></g></svg>
<div class="b" style="left:1105.5px;top:980.5px;width:44.5px;height:46.5px;background:#fff;box-sizing:border-box;border:1px solid #cfcfcf;box-shadow:0 1px 2px rgba(0,0,0,.18)"></div>
<div class="b" style="left:1105.5px;top:1034.5px;width:44.5px;height:46.7px;background:#fff;box-sizing:border-box;border:1px solid #cfcfcf;box-shadow:0 1px 2px rgba(0,0,0,.18)"></div>
<div class="b" style="left:1105.5px;top:1088.8px;width:44.5px;height:46.8px;background:#fff;box-sizing:border-box;border:1px solid #cfcfcf;box-shadow:0 1px 2px rgba(0,0,0,.18)"></div>
<svg class="b" style="left:1113px;top:991px" width="26" height="26" viewBox="0 0 26 26"><path d="M5.5 8.2 A8.8 8.8 0 1 0 12.3 4.4" fill="none" stroke="#111" stroke-width="2.6"/><path d="M9.4 0.9 L15.2 4.6 L9.6 8.2 Z" fill="#111"/><circle cx="12.7" cy="13.2" r="1.9" fill="#111"/></svg>
<div class="b" style="left:1120.7px;top:1056.5px;width:14.399999999999864px;height:3.0px;background:#111;"></div>
<div class="b" style="left:1126.4px;top:1050.8px;width:3.0px;height:14.200000000000045px;background:#111;"></div>
<div class="b" style="left:1120.8px;top:1110.5px;width:14.200000000000045px;height:3.0px;background:#111;"></div>
<div class="b" style="left:1819.5px;top:1088.5px;width:132.5px;height:47px;background:#fff;box-sizing:border-box;border:1px solid #cfcfcf;box-shadow:0 1px 2px rgba(0,0,0,.15)"></div>
<div class="t" id="t64" style="left:1834.20px;top:1101.60px;font-size:21.60px;line-height:21.60px;color:#161616;letter-spacing:0.060px;-webkit-text-stroke:0.6px #161616;">Visitors</div>
<svg class="b" style="left:1920px;top:1105px" width="18" height="14" viewBox="0 0 18 14"><path d="M4 4.5 L9 9.5 L14 4.5" fill="none" stroke="#111" stroke-width="2.6"/></svg>
<svg class="b" style="left:659px;top:376px" width="24" height="24" viewBox="0 0 24 24"><circle cx="12.3" cy="11.8" r="11.4" fill="#efd03a"/><path d="M8.3 8.1 H16.3 M9.6 11.5 H15 M11.2 14.3 H13.4" stroke="#fff" stroke-width="1.8"/><circle cx="12.3" cy="15.6" r="1.1" fill="#fff"/></svg>
<svg class="b" style="left:0;top:0" width="2048" height="1456" viewBox="0 0 2048 1456"><path fill="#000" fill-rule="evenodd" d="M0 0 H2048 V1456 H0 Z M10 1 H2038 A8 8 0 0 1 2046 9 V1446 A8 8 0 0 1 2038 1454 H10 A8 8 0 0 1 2 1446 V9 A8 8 0 0 1 10 1 Z"/></svg>
</body></html>
